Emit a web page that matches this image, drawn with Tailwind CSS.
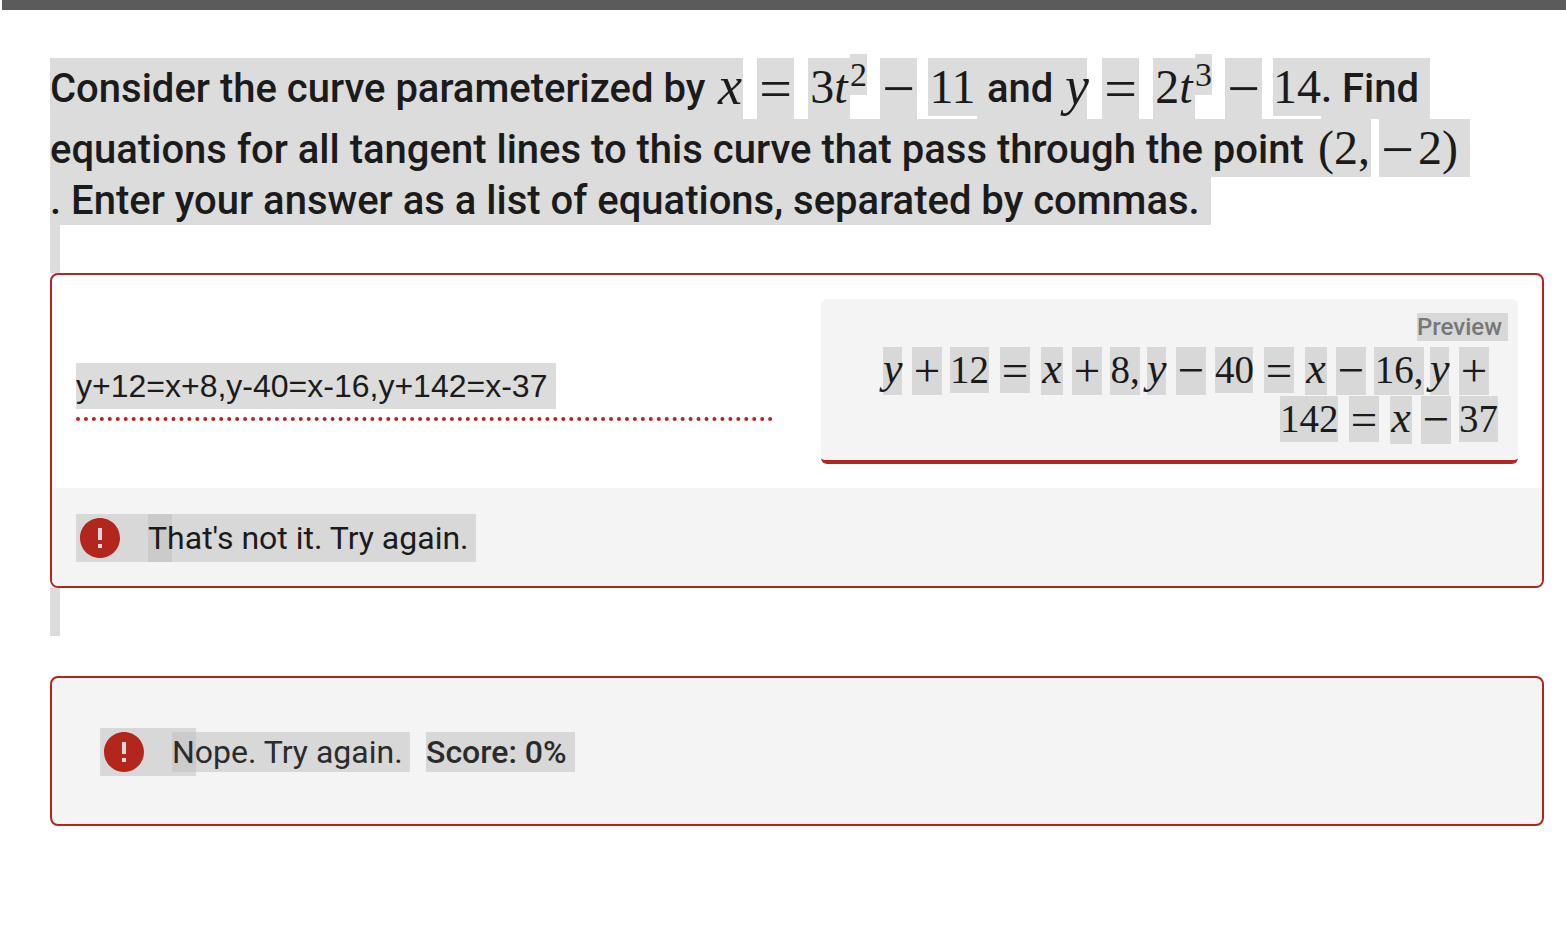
<!DOCTYPE html>
<html lang="en">
<head>
    <meta charset="UTF-8">
    <meta name="viewport" content="width=device-width, initial-scale=1.0">
    <title>Tangent lines</title>
    <script src="https://cdn.jsdelivr.net/npm/@tailwindcss/browser@4"></script>
</head>
<body class="bg-white text-[#1b1b1b] font-['Roboto',sans-serif]">
    <!-- Top bar -->
    <header class="h-[10px] ml-[2px] bg-[#5b5b5b]"></header>

    <main class="pt-12 pl-[50px] pr-[22px]">
        <!-- Question -->
        <h1 class="text-[40px] font-medium">
            <span class="flex h-[61px] leading-[61px] whitespace-pre">
                <span class="bg-[#dcdcdc] w-[667px]">Consider the curve parameterized by </span>
                <i class="bg-[#dcdcdc] w-[26px] mr-[14px] text-center text-[54px] leading-[56px] font-normal font-['Liberation_Serif',serif]">x</i>
                <span class="bg-[#dcdcdc] w-[37px] mr-[14px] text-center text-[58px] leading-[61px] font-normal font-['Liberation_Serif',serif]">=</span>
                <span class="bg-[#dcdcdc] w-[42px] text-center text-[48px] leading-[58px] font-normal font-['Liberation_Serif',serif]">3<i>t</i></span>
                <sup class="bg-[#dcdcdc] w-[17px] h-[41px] -mt-1 mr-[13px] top-0 text-center text-[34px] leading-[41px] font-normal font-['Liberation_Serif',serif]">2</sup>
                <span class="bg-[#dcdcdc] w-[37px] mr-[11px] text-center text-[58px] leading-[61px] font-normal font-['Liberation_Serif',serif]">−</span>
                <span class="bg-[#dcdcdc] w-[49px] h-[58px] text-center text-[48px] leading-[58px] font-normal font-['Liberation_Serif',serif]">11</span>
                <span class="bg-[#dcdcdc] w-[88px]"> and </span>
                <i class="bg-[#dcdcdc] w-[22px] mr-[15px] text-center text-[54px] leading-[56px] font-normal font-['Liberation_Serif',serif]">y</i>
                <span class="bg-[#dcdcdc] w-[37px] mr-[14px] text-center text-[58px] leading-[61px] font-normal font-['Liberation_Serif',serif]">=</span>
                <span class="bg-[#dcdcdc] w-[42px] text-center text-[48px] leading-[58px] font-normal font-['Liberation_Serif',serif]">2<i>t</i></span>
                <sup class="bg-[#dcdcdc] w-[17px] h-[41px] -mt-1 mr-[13px] top-0 text-center text-[34px] leading-[41px] font-normal font-['Liberation_Serif',serif]">3</sup>
                <span class="bg-[#dcdcdc] w-[37px] mr-[11px] text-center text-[58px] leading-[61px] font-normal font-['Liberation_Serif',serif]">−</span>
                <span class="bg-[#dcdcdc] w-[48px] h-[58px] text-center text-[48px] leading-[58px] font-normal font-['Liberation_Serif',serif]">14</span>
                <span class="bg-[#dcdcdc] w-[109px]">. Find </span>
            </span>
            <span class="flex h-[58px] leading-[61px] whitespace-pre">
                <span class="bg-[#dcdcdc] w-[1266px]">equations for all tangent lines to this curve that pass through the point </span>
                <span class="bg-[#dcdcdc] w-[55px] mr-2 pl-[2px] text-[48px] leading-[58px] font-normal font-['Liberation_Serif',serif]">(2,</span>
                <span class="bg-[#dcdcdc] w-[37px] text-center text-[58px] leading-[61px] font-normal font-['Liberation_Serif',serif]">−</span>
                <span class="bg-[#dcdcdc] w-[54px] pl-[2px] text-[48px] leading-[58px] font-normal font-['Liberation_Serif',serif]">2)</span>
            </span>
            <span class="flex h-12 leading-[48px] whitespace-pre">
                <span class="bg-[#dcdcdc] w-[1161px]">. Enter your answer as a list of equations, separated by commas. </span>
            </span>
        </h1>
        <div class="w-[10px] h-12 bg-[#dcdcdc]"></div>

        <!-- Answer box -->
        <section class="border-2 border-[#b3261e] rounded-lg overflow-hidden">
            <div class="grid grid-cols-2 gap-12 p-6 items-center">
                <div class="pt-5 pb-2 border-b-4 border-dotted border-[#b3261e]">
                    <input type="text" aria-label="Answer" value="y+12=x+8,y-40=x-16,y+142=x-37"
                        class="block w-[480px] h-[46px] bg-[#dcdcdc] text-[32px] font-['Liberation_Sans',sans-serif] focus:outline-none">
                </div>
                <div class="bg-[#f4f4f4] rounded-md border-b-4 border-[#b3261e] pt-[14px] pb-4 flex flex-col items-end">
                    <div class="bg-[#d8d8d8] text-[#777777] text-[24px] leading-[28px] font-medium w-[91px] mr-[10px] mb-[6px]">Preview</div>
                    <div class="flex items-start mr-[29px] h-[49px] text-[39px] leading-[46px] text-center font-['Liberation_Serif',serif]">
                        <i class="bg-[#d8d8d8] w-[19px] h-12 mr-[10px] text-[44px] leading-[44px]">y</i>
                        <span class="bg-[#d8d8d8] w-[30px] h-12 mr-2 text-[47px] leading-[47px]">+</span>
                        <span class="bg-[#d8d8d8] w-[39px] h-[46px] mr-[11px]">12</span>
                        <span class="bg-[#d8d8d8] w-[30px] h-[46px] mr-[11px] text-[47px] leading-[47px]">=</span>
                        <i class="bg-[#d8d8d8] w-[22px] h-12 mr-[9px] text-[44px] leading-[44px]">x</i>
                        <span class="bg-[#d8d8d8] w-[30px] h-12 mr-2 text-[47px] leading-[47px]">+</span>
                        <span class="bg-[#d8d8d8] w-[30px] h-12 mr-[7px]">8,</span>
                        <i class="bg-[#d8d8d8] w-[19px] h-12 mr-[10px] text-[44px] leading-[44px]">y</i>
                        <span class="bg-[#d8d8d8] w-[30px] h-12 mr-[9px] text-[47px] leading-[47px]">−</span>
                        <span class="bg-[#d8d8d8] w-[38px] h-[46px] mr-[11px]">40</span>
                        <span class="bg-[#d8d8d8] w-[30px] h-[46px] mr-[11px] text-[47px] leading-[47px]">=</span>
                        <i class="bg-[#d8d8d8] w-[22px] h-12 mr-[9px] text-[44px] leading-[44px]">x</i>
                        <span class="bg-[#d8d8d8] w-[30px] h-12 mr-2 text-[47px] leading-[47px]">−</span>
                        <span class="bg-[#d8d8d8] w-[50px] h-12 mr-[6px]">16,</span>
                        <i class="bg-[#d8d8d8] w-[19px] h-12 mr-[10px] text-[44px] leading-[44px]">y</i>
                        <span class="bg-[#d8d8d8] w-[30px] h-12 text-[47px] leading-[47px]">+</span>
                    </div>
                    <div class="flex items-start mr-5 h-12 text-[39px] leading-[46px] text-center font-['Liberation_Serif',serif]">
                        <span class="bg-[#d8d8d8] w-[58px] h-[46px] mr-[11px]">142</span>
                        <span class="bg-[#d8d8d8] w-[30px] h-[46px] mr-[11px] text-[47px] leading-[47px]">=</span>
                        <i class="bg-[#d8d8d8] w-[22px] h-12 mr-[9px] text-[44px] leading-[44px]">x</i>
                        <span class="bg-[#d8d8d8] w-[30px] h-12 mr-2 text-[47px] leading-[47px]">−</span>
                        <span class="bg-[#d8d8d8] w-[39px] h-[46px]">37</span>
                    </div>
                </div>
            </div>
            <div class="bg-[#f4f4f4] px-6 pt-[26px] pb-6 flex items-center">
                <div class="bg-[#d8d8d8] w-24 h-12 flex items-center">
                    <svg class="w-12 h-12" viewBox="0 0 24 24" fill="#b3261e"><path d="M12 2C6.48 2 2 6.48 2 12s4.480 10 10 10 10-4.480 10-10S17.520 2 12 2zm1 15h-2v-2h2v2zm0-4h-2V7h2v6z"/></svg>
                </div>
                <p class="relative z-0 -ml-6 w-[328px] h-12 bg-[#d8d8d8] text-[32px] leading-[48px] before:absolute before:-z-10 before:left-0 before:top-0 before:w-6 before:h-full before:bg-[#cbcbcb]">That's not it. Try again.</p>
            </div>
        </section>
        <div class="w-[10px] h-12 bg-[#dcdcdc] mb-10"></div>

        <!-- Score box -->
        <section class="border-2 border-[#b3261e] rounded-lg bg-[#f4f4f4] px-12 pt-[50px] pb-12 flex items-center text-[32px] leading-[40px] text-[#2b2b2b]">
            <div class="bg-[#d8d8d8] w-24 h-12 flex items-center">
                <svg class="w-12 h-12" viewBox="0 0 24 24" fill="#b3261e"><path d="M12 2C6.48 2 2 6.48 2 12s4.480 10 10 10 10-4.480 10-10S17.520 2 12 2zm1 15h-2v-2h2v2zm0-4h-2V7h2v6z"/></svg>
            </div>
            <p class="relative z-0 -ml-6 mr-4 w-[238px] bg-[#d8d8d8] before:absolute before:-z-10 before:left-0 before:top-0 before:w-6 before:h-full before:bg-[#cbcbcb]">Nope. Try again.</p>
            <p class="w-[149px] bg-[#d8d8d8] font-medium">Score: 0%</p>
        </section>
    </main>
</body>
</html>
